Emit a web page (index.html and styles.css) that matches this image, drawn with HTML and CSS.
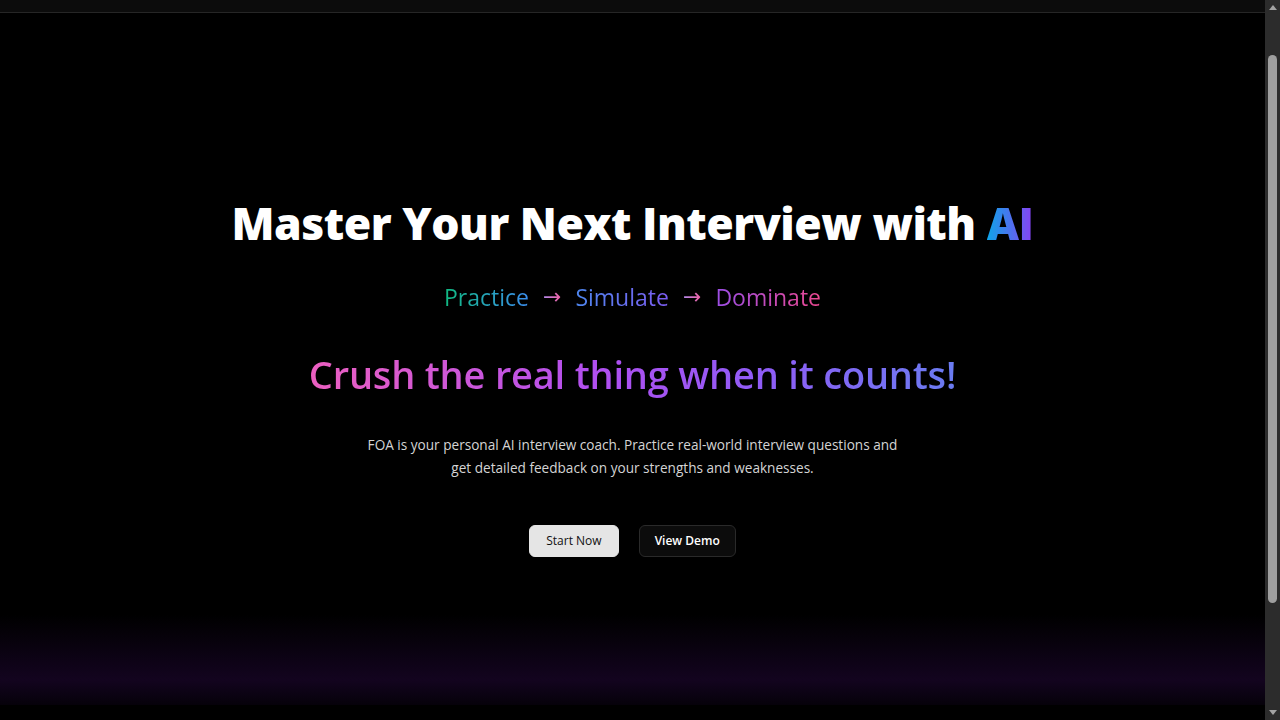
FILE: index.html
```html
<!DOCTYPE html>
<html lang="en">
<head>
  <meta charset="UTF-8" />
  <title>FOA - AI Interview Coach</title>
  <meta name="viewport" content="width=device-width, initial-scale=1.0" />
  <link rel="stylesheet" href="styles.css">
</head>
<body>

  <nav class="navbar"></nav>

  <section class="hero">
    <h1 class="hero-title">Master Your Next Interview with <span class="ai">AI</span></h1>

    <p class="steps">
      <span class="step step-1">Practice</span>
      <span class="arrow">→</span>
      <span class="step step-2">Simulate</span>
      <span class="arrow">→</span>
      <span class="step step-3">Dominate</span>
    </p>

    <h2 class="tagline">Crush the real thing when it counts!</h2>

    <p class="intro">
      FOA is your personal AI interview coach. Practice real-world interview questions and
      get detailed feedback on your strengths and weaknesses.
    </p>

    <div class="actions">
      <button class="btn btn-light">Start Now</button>
      <button class="btn btn-dark">View Demo</button>
    </div>

    <div class="glow"></div>
  </section>

  <footer class="page-end"></footer>

  <!-- window scrollbar as it appears in the capture -->
  <div class="scrollbar" aria-hidden="true">
    <span class="sb-arrow sb-up"></span>
    <span class="sb-thumb"></span>
    <span class="sb-arrow sb-down"></span>
  </div>

  <script>
    // page was captured scrolled a little past the navbar
    window.scrollTo(0, 53);
  </script>

</body>
</html>
```

FILE: styles.css
```css
html {
  color-scheme: dark;
}

body {
  margin: 0;
  padding-right: 15px;
  background: #000;
  color: #fff;
  font-family: 'Open Sans', 'Noto Sans', sans-serif;
}

.navbar {
  height: 65px;
  background: #0c0c0c;
  border-bottom: 1px solid #262626;
}

.hero {
  position: relative;
  min-height: 100vh;
  padding-top: 7px;
  box-sizing: border-box;
  display: flex;
  flex-direction: column;
  align-items: center;
  justify-content: center;
  text-align: center;
  overflow: hidden;
}

.hero-title {
  margin: 0;
  font-size: 44.5px;
  font-weight: 800;
  letter-spacing: -0.5px;
  line-height: 1.2;
}

.ai {
  background: linear-gradient(90deg, #0ea5e9, #8b3ff5);
  -webkit-background-clip: text;
  background-clip: text;
  color: transparent;
}

.steps {
  margin: 31px 0 0;
  font-size: 23px;
  font-weight: 500;
  display: flex;
  align-items: center;
  gap: 14px;
}

.step,
.arrow {
  -webkit-background-clip: text;
  background-clip: text;
  color: transparent;
}

.step-1 { background-image: linear-gradient(90deg, #10b981, #3b8ef0); }
.step-2 { background-image: linear-gradient(90deg, #4d86ee, #7c5cf2); }
.step-3 { background-image: linear-gradient(90deg, #9b4ee6, #ec4890); }

.arrow {
  background-image: linear-gradient(90deg, #b48cf0, #ee5fa0);
  font-family: 'DejaVu Sans', sans-serif;
  font-size: 22px;
  font-weight: 400;
}

.tagline {
  margin: 37px 0 0;
  font-size: 38px;
  font-weight: 600;
  letter-spacing: -0.2px;
  line-height: 1.3;
  background: linear-gradient(90deg, #ec5fc0, #b04ff0 45%, #8f5cf6 70%, #6a7cf2);
  -webkit-background-clip: text;
  background-clip: text;
  color: transparent;
}

.intro {
  margin: 34px 0 0;
  max-width: 540px;
  font-size: 13.6px;
  line-height: 23px;
  color: #d4d4d4;
}

.actions {
  margin-top: 46px;
  display: flex;
  gap: 20px;
}

.btn {
  height: 32px;
  padding: 0 16px;
  border-radius: 6px;
  font-family: inherit;
  font-size: 12px;
  cursor: pointer;
}

.btn-light {
  background: #e5e5e5;
  color: #111;
  border: 1px solid #e5e5e5;
  font-weight: 500;
}

.btn-dark {
  background: #0c0c0c;
  color: #fff;
  border: 1px solid #2a2a2a;
  font-weight: 600;
  padding: 0 15px;
}

.glow {
  position: absolute;
  left: 0;
  right: 0;
  bottom: 28px;
  height: 90px;
  background: linear-gradient(180deg, rgba(20, 4, 30, 0) 0%, #13041f 72%, rgba(8, 2, 14, 0.7) 100%);
  pointer-events: none;
}

.page-end {
  height: 121px;
  background: #050208;
}

/* scrollbar */
.scrollbar {
  position: fixed;
  top: 0;
  right: 0;
  bottom: 0;
  width: 15px;
  background: #2c2c2c;
  display: flex;
  flex-direction: column;
  align-items: center;
}

.sb-arrow {
  width: 0;
  height: 0;
  border-left: 4px solid transparent;
  border-right: 4px solid transparent;
}

.sb-up {
  margin-top: 5px;
  border-bottom: 5px solid #a3a3a3;
}

.sb-down {
  margin-top: auto;
  margin-bottom: 5px;
  border-top: 5px solid #a3a3a3;
}

.sb-thumb {
  margin-top: 45px;
  width: 9px;
  height: 548px;
  border-radius: 5px;
  background: #9f9f9f;
}
```
